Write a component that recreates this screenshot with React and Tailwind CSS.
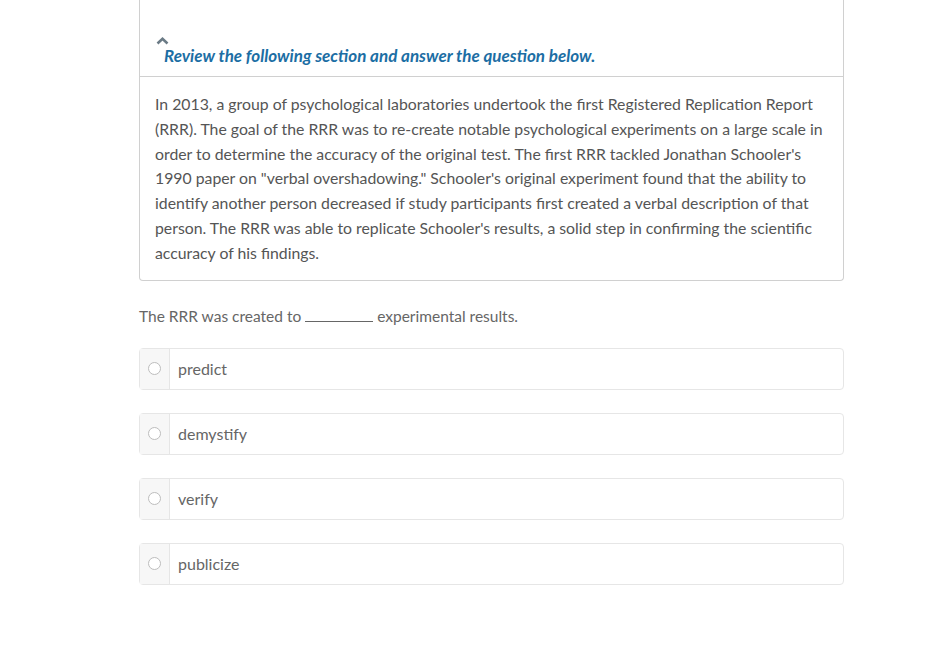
import React from 'react';

const options = ['predict', 'demystify', 'verify', 'publicize'];

const passage =
  'In 2013, a group of psychological laboratories undertook the first Registered Replication Report (RRR). The goal of the RRR was to re-create notable psychological experiments on a large scale in order to determine the accuracy of the original test. The first RRR tackled Jonathan Schooler\'s 1990 paper on "verbal overshadowing." Schooler\'s original experiment found that the ability to identify another person decreased if study participants first created a verbal description of that person. The RRR was able to replicate Schooler\'s results, a solid step in confirming the scientific accuracy of his findings.';

const App = () => {
  return (
    <div className="min-h-[656px] bg-white font-['Lato','Liberation_Sans',sans-serif]">
      <div className="ml-[139px] w-[705px]">
        <div className="border-x border-b border-[#d0d0d0] rounded-b">
          <div className="h-[77px] border-b border-[#d0d0d0] pl-[16px] pt-[37px]">
            <svg width="13" height="8" viewBox="0 0 13 8" className="block">
              <path d="M1.5 6.5 L6.5 1.8 L11.5 6.5" fill="none" stroke="#6b7b86" strokeWidth="2.6" />
            </svg>
            <div className="pl-[8px] text-[17px] leading-[20px] font-bold italic text-[#1c6ea4] mt-[1px]">
              Review the following section and answer the question below.
            </div>
          </div>
          <div className="px-[15px] pt-[15px] pb-[14px] text-[15.8px] leading-[24.8px] text-[#555]">
            {passage}
          </div>
        </div>

        <div className="mt-[24px] text-[15.5px] leading-[22px] text-[#666]">
          The RRR was created to <span className="inline-block w-[68px] border-b border-[#666] align-baseline"></span> experimental results.
        </div>

        <div className="mt-[21px] flex flex-col gap-[23px]">
          {options.map((opt) => (
            <div key={opt} className="flex h-[42px] border border-[#e6e6e6] rounded">
              <div className="w-[30px] bg-[#f7f7f7] border-r border-[#e6e6e6] flex items-center justify-center">
                <span className="w-[13px] h-[13px] rounded-full border border-[#bdbdbd] bg-white -ml-[1px]"></span>
              </div>
              <div className="flex items-center pl-[8px] text-[16px] text-[#666]">{opt}</div>
            </div>
          ))}
        </div>
      </div>
    </div>
  );
};

export default App;
